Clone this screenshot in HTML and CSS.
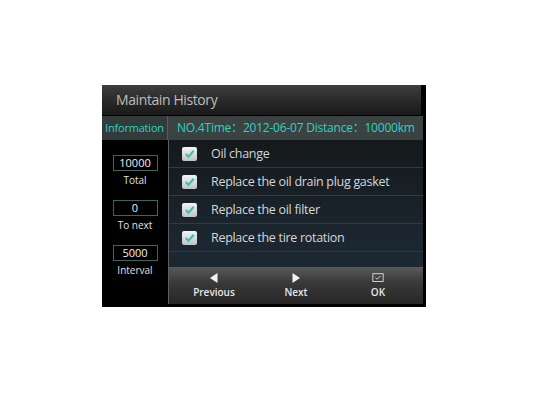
FILE: index.html
```html
<!DOCTYPE html>
<html>
<head>
<meta charset="utf-8">
<link rel="stylesheet" href="styles.css">
</head>
<body>
<div class="screen">
  <div class="title">Maintain History</div>
  <div class="info">
    <div class="info-label">Information</div>
    <div class="info-text">NO.4Time：2012-06-07 Distance：10000km</div>
  </div>
  <div class="main">
    <div class="side">
      <div class="stat"><div class="box">10000</div><div class="lbl">Total</div></div>
      <div class="stat"><div class="box">0</div><div class="lbl">To next</div></div>
      <div class="stat"><div class="box">5000</div><div class="lbl">Interval</div></div>
    </div>
    <div class="content">
      <div class="list">
        <div class="row"><span class="cb"><svg viewBox="0 0 15 15"><path d="M3.5 7.5 L6.5 10.5 L12 4" fill="none" stroke="#2fc4b4" stroke-width="2.2"/></svg></span><span class="txt">Oil change</span></div>
        <div class="row"><span class="cb"><svg viewBox="0 0 15 15"><path d="M3.5 7.5 L6.5 10.5 L12 4" fill="none" stroke="#2fc4b4" stroke-width="2.2"/></svg></span><span class="txt">Replace the oil drain plug gasket</span></div>
        <div class="row"><span class="cb"><svg viewBox="0 0 15 15"><path d="M3.5 7.5 L6.5 10.5 L12 4" fill="none" stroke="#2fc4b4" stroke-width="2.2"/></svg></span><span class="txt">Replace the oil filter</span></div>
        <div class="row"><span class="cb"><svg viewBox="0 0 15 15"><path d="M3.5 7.5 L6.5 10.5 L12 4" fill="none" stroke="#2fc4b4" stroke-width="2.2"/></svg></span><span class="txt">Replace the tire rotation</span></div>
      </div>
      <div class="buttons">
        <div class="btn"><svg class="ico" viewBox="0 0 12 12"><path d="M9.5 1 L2 6 L9.5 11 Z" fill="#f2f2f2"/></svg><span>Previous</span></div>
        <div class="btn"><svg class="ico" viewBox="0 0 12 12"><path d="M2.5 1 L10 6 L2.5 11 Z" fill="#f2f2f2"/></svg><span>Next</span></div>
        <div class="btn"><svg class="ico" viewBox="0 0 14 12"><rect x="1" y="1" width="12" height="9" fill="none" stroke="#e8e8e8" stroke-width="1"/><path d="M4 5.5 L6 7.5 L10 3.5" fill="none" stroke="#e8e8e8" stroke-width="1"/></svg><span>OK</span></div>
      </div>
    </div>
  </div>
</div>
</body>
</html>
```
FILE: styles.css
```css
html, body {
  margin: 0;
  padding: 0;
  background: #ffffff;
}
body {
  font-family: "Open Sans", "Noto Sans CJK SC", sans-serif;
  padding: 85px 0 0 102px;
}
.screen {
  width: 324px;
  height: 222px;
  background: #000;
  display: flex;
  flex-direction: column;
  box-sizing: border-box;
}
.title {
  height: 30px;
  margin-right: 5px;
  background: linear-gradient(#3e3e3e, #262626 60%, #1a1a1a);
  color: #bdbdbd;
  font-size: 14px;
  letter-spacing: -0.4px;
  line-height: 30px;
  padding-left: 14px;
  border-bottom: 1px solid #000;
}
.info {
  height: 24px;
  display: flex;
  margin-right: 3px;
}
.info-label {
  width: 65px;
  background: #333a3a;
  color: #2ad2c4;
  font-size: 11px;
  line-height: 24px;
  text-align: center;
  letter-spacing: -0.2px;
  border-right: 1px solid #555c5c;
}
.info-text {
  flex: 1;
  background: #3b4242;
  color: #2ad2c4;
  font-size: 12px;
  line-height: 24px;
  padding-left: 9px;
  white-space: nowrap;
  overflow: hidden;
  letter-spacing: -0.22px;
}
.main {
  flex: 1;
  display: flex;
}
.side {
  width: 66px;
  display: flex;
  flex-direction: column;
  align-items: center;
  padding-top: 15px;
  gap: 13px;
}
.stat {
  display: flex;
  flex-direction: column;
  align-items: center;
}
.box {
  width: 43px;
  height: 14px;
  border: 1px solid #3d6660;
  color: #f0f0f0;
  font-size: 11px;
  line-height: 14px;
  text-align: center;
}
.lbl {
  color: #e0e0e0;
  font-size: 10px;
  line-height: 14px;
  margin-top: 2px;
}
.content {
  flex: 1;
  display: flex;
  flex-direction: column;
  margin-right: 3px;
  border-left: 1px solid #5b5f60;
  background: linear-gradient(#15191b, #1b2630 60%, #1c2a36);
  margin-bottom: 3px;
}
.list {
  flex: 1;
}
.row {
  height: 27px;
  border-bottom: 1px solid #34393c;
  display: flex;
  align-items: center;
  padding-left: 13px;
}
.cb {
  width: 15px;
  height: 14px;
  border-radius: 2px;
  background: linear-gradient(#f4f4f4, #bfc3c3);
  display: block;
  margin-right: 14px;
}
.cb svg {
  width: 15px;
  height: 14px;
  display: block;
}
.txt {
  color: #d4d7d7;
  font-size: 12.5px;
  letter-spacing: -0.3px;
  white-space: nowrap;
}
.buttons {
  height: 37px;
  display: flex;
  background: linear-gradient(#5a5a5a, #3a3a3a 40%, #262626);
  padding: 0 4px;
}
.btn {
  flex: 1;
  display: flex;
  flex-direction: column;
  align-items: center;
  padding-top: 5px;
}
.ico {
  width: 12px;
  height: 12px;
  display: block;
}
.btn span {
  color: #e6e6e6;
  font-size: 10px;
  font-weight: 600;
  line-height: 14px;
  margin-top: 1px;
}
```
